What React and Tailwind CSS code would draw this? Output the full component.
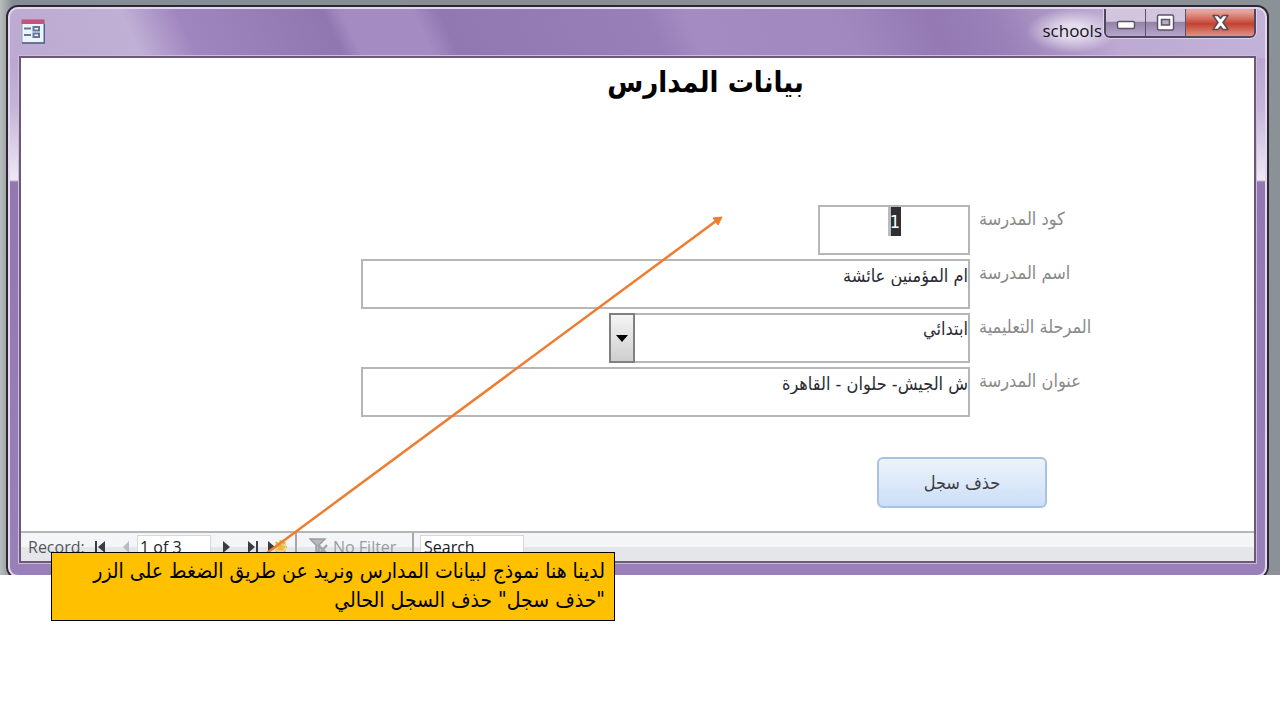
import React, { useState } from "react";

const fieldClass =
  "block h-[50px] w-full rounded-none border-2 border-[#b6b6b6] bg-white px-0 pt-0 pb-[18px] text-[18px] leading-7 text-[#2b2b33] outline-none";

const labelClass =
  "text-left text-[18px] leading-7 whitespace-nowrap text-[#8a8a8a]";

const FormIcon = () => (
  <svg className="h-[25px] w-6" viewBox="0 0 24 25" fill="none">
    <rect x="1" y="1" width="22" height="23" rx="1" fill="#eef4fb" stroke="#8fa3c0" strokeWidth="1" />
    <path d="M0.5 0.5h23v4.5h-23z" fill="#c4527c" />
    <path d="M3 9.5h7M3 16h7" stroke="#60779b" strokeWidth="2" />
    <path d="M12.5 8h5.5v3.5h-5.5zM12.5 14.5h5.5v3.5h-5.5z" fill="#fff" stroke="#60779b" strokeWidth="2" />
    <path d="M1 24h22.5V5" stroke="#47618a" strokeWidth="1.5" />
  </svg>
);

const TitleBar = () => (
  <header className="flex h-[47px] items-start pl-0.5">
    <div className="pt-[10px]">
      <FormIcon />
    </div>
    <span className="-mr-3.5 ml-auto bg-[radial-gradient(closest-side,rgba(255,255,255,0.65)_30%,transparent)] px-4 pt-3 pb-3 text-[17px] leading-5 text-[#15101c]">
      schools
    </span>
    <div className="flex h-[29px] overflow-hidden rounded-b-md border-2 border-t-0 border-[#4f4660] shadow-[0_0_0_1px_#ddd0e8]">
      <button
        type="button"
        aria-label="Minimize"
        className="flex w-10 items-center justify-center border-r border-[#5d516e] bg-linear-to-b from-[#d2c6de] from-45% via-[#9384a6] via-50% to-[#b9a5cd] pt-1"
      >
        <svg className="h-[10px] w-5" viewBox="0 0 20 10">
          <rect x="1.5" y="1.5" width="17" height="7" rx="1.5" fill="#fff" stroke="#5c5568" strokeWidth="1.5" />
        </svg>
      </button>
      <button
        type="button"
        aria-label="Maximize"
        className="flex w-10 items-center justify-center border-r border-[#5d516e] bg-linear-to-b from-[#d2c6de] from-45% via-[#9384a6] via-50% to-[#b9a5cd]"
      >
        <svg className="h-[17px] w-[19px]" viewBox="0 0 19 17">
          <rect x="1.5" y="1" width="16" height="15" rx="1.5" fill="#fff" stroke="#5c5568" strokeWidth="1.5" />
          <rect x="5.5" y="5.5" width="8" height="5.5" fill="#b8adc6" stroke="#5c5568" strokeWidth="1.5" />
        </svg>
      </button>
      <button
        type="button"
        aria-label="Close"
        className="flex w-[68px] items-center justify-center bg-linear-to-b from-[#e5a39d] from-10% via-[#c2402f] via-55% to-[#df9184]"
      >
        <svg className="h-[17px] w-[17px]" viewBox="0 0 17 17">
          <path
            d="M1 1.5h5l2.5 3 2.5-3h5l-5 7 5 7h-5l-2.5-3-2.5 3h-5l5-7z"
            fill="#fff"
            stroke="#5b4a52"
            strokeWidth="1.5"
            strokeLinejoin="round"
          />
        </svg>
      </button>
    </div>
  </header>
);

const SchoolForm = () => {
  const [code, setCode] = useState("1");
  const [name, setName] = useState("ام المؤمنين عائشة");
  const [stage, setStage] = useState("ابتدائي");
  const [address, setAddress] = useState("ش الجيش- حلوان - القاهرة");

  return (
    <form
      className="h-[473px] bg-white font-['DejaVu_Sans_Condensed','DejaVu_Sans',sans-serif]"
      onSubmit={(e) => e.preventDefault()}
    >
      <h1
        dir="rtl"
        className="mr-[96px] ml-[232px] text-center text-[29px] leading-[48px] font-bold text-black"
      >
        بيانات المدارس
      </h1>

      <div
        dir="rtl"
        className="mt-[99px] mr-[157px] ml-[340px] grid grid-cols-[118px_minmax(0,1fr)] gap-x-[9px] gap-y-1"
      >
        <label htmlFor="code" className={labelClass}>كود المدرسة</label>
        <input
          id="code"
          value={code}
          onChange={(e) => setCode(e.target.value)}
          className="block h-[50px] w-[152px] border-2 border-[#b6b6b6] bg-white bg-[linear-gradient(to_right,#bbb_3px,#303034_3px)] bg-size-[13px_29px] bg-position-[center_top] bg-no-repeat pt-0 pr-0 pb-[18px] pl-0.5 text-center text-[18px] leading-7 text-white outline-none"
        />

        <label htmlFor="name" className={labelClass}>اسم المدرسة</label>
        <input
          id="name"
          value={name}
          onChange={(e) => setName(e.target.value)}
          className={fieldClass}
        />

        <label htmlFor="stage" className={labelClass}>المرحلة التعليمية</label>
        <div className="relative w-[361px]">
          <select
            id="stage"
            value={stage}
            onChange={(e) => setStage(e.target.value)}
            className={`${fieldClass} appearance-none`}
          >
            <option value="ابتدائي">ابتدائي</option>
          </select>
          <span className="pointer-events-none absolute inset-y-0 left-0 flex w-[26px] items-center justify-center border-2 border-[#808080] bg-linear-to-b from-[#f4f4f4] to-[#cfcfcf]">
            <svg className="h-[7px] w-3" viewBox="0 0 12 7">
              <path d="M0 0h12l-6 7z" fill="#000" />
            </svg>
          </span>
        </div>

        <label htmlFor="address" className={labelClass}>عنوان المدرسة</label>
        <input
          id="address"
          value={address}
          onChange={(e) => setAddress(e.target.value)}
          className={fieldClass}
        />
      </div>

      <div className="mt-10 mr-[207px] flex justify-end">
        <button
          type="button"
          dir="rtl"
          className="h-[51px] w-[170px] rounded-md border-2 border-[#a9c1e2] bg-linear-to-b from-[#edf3fc] to-[#cbdff7] text-[18px] text-[#3d3d42]"
        >
          حذف سجل
        </button>
      </div>
    </form>
  );
};

const RecordBar = () => (
  <footer className="flex h-[30px] items-stretch border-t-2 border-[#b4b6ba] bg-linear-to-b from-[#f4f5f7] from-50% to-[#e5e6e9] to-50% text-[16px] leading-7 text-[#55565e]">
    <span className="w-[65px] pl-[7px]">Record:</span>
    <button type="button" aria-label="First record" className="flex w-[30px] items-center pl-2">
      <svg className="h-3 w-3" viewBox="0 0 12 12">
        <path d="M1 0h2v12H1zM11 0v12L4 6z" fill="#3c3c44" />
      </svg>
    </button>
    <button type="button" aria-label="Previous record" className="flex w-[21px] items-center pl-1.5">
      <svg className="h-3 w-2" viewBox="0 0 8 12">
        <path d="M7 0v12L1 6z" fill="#b9bbc0" />
      </svg>
    </button>
    <input
      aria-label="Current record"
      defaultValue="1 of 3"
      className="mt-0.5 w-[74px] border border-[#d5d7da] bg-white px-0.5 pb-[3px] text-[16px] leading-5 text-[#25252c] outline-none"
    />
    <button type="button" aria-label="Next record" className="flex w-[34px] items-center pl-3">
      <svg className="h-3 w-2" viewBox="0 0 8 12">
        <path d="M0 0v12l7-6z" fill="#3c3c44" />
      </svg>
    </button>
    <button type="button" aria-label="Last record" className="flex w-[22px] items-center pl-0.5">
      <svg className="h-3 w-3" viewBox="0 0 12 12">
        <path d="M9 0h2v12H9zM1 0v12l7-6z" fill="#3c3c44" />
      </svg>
    </button>
    <button type="button" aria-label="New record" className="flex w-7 items-center">
      <svg className="h-4 w-5" viewBox="0 0 20 16">
        <path d="M1 2v12l7-6z" fill="#3c3c44" />
        <path d="M8 3h11v11H8z" fill="#f3d98c" />
        <path d="M13.5 1v14M7 8h13M9 3l9 10M18 3L9 13" stroke="#e8b93c" strokeWidth="2" strokeDasharray="3 1" />
      </svg>
    </button>
    <div className="flex w-[119px] items-center border-x-2 border-[#a6a8ad] pl-3 text-[#999ba0]">
      <svg className="mr-1 h-[18px] w-5" viewBox="0 0 20 18" fill="none">
        <path d="M1 1h15l-6 6v9l-3-3V7z" fill="#b9babd" stroke="#9b9ca1" strokeWidth="1.5" />
        <path d="M9 7l9 9M18 7l-8 9" stroke="#a4a5aa" strokeWidth="2.5" />
      </svg>
      <span className="whitespace-nowrap">No Filter</span>
    </div>
    <input
      aria-label="Search"
      defaultValue="Search"
      className="mt-0.5 ml-1.5 w-[104px] border border-[#d5d7da] bg-white px-[3px] pb-[3px] text-[16px] leading-5 text-[#18181d] outline-none"
    />
  </footer>
);

const App = () => {
  return (
    <main className="relative min-h-screen overflow-hidden bg-white font-['Open_Sans','DejaVu_Sans',sans-serif]">
      <div className="h-[575px] overflow-hidden bg-linear-to-r from-[#b9bdbd] from-0% via-[#858d94] via-1% to-[#8b9297] pt-[5px] pr-[11px] pl-[6px]">
        <section className="rounded-xl border-2 border-[#2b2830] bg-[linear-gradient(to_bottom,transparent_0,transparent_49px,#baa6cf_50px,#c5b4d9_100px,#eee8f4_173px,#9277b1_175px,#9a80b9_100%)]">
          {/* Glass frame around the client area */}
          <div className="rounded-[10px] border-2 border-[#e3d8ee] bg-[linear-gradient(65deg,#bda9d1_0,#c0b0d5_120px,#a086bf_170px,#9177b0_303px,#a48bc1_320px,#a48bc1_385px,#9178b1_408px,#997fb8_595px,#a48bc1_630px,#a189bf_770px,#9479b3_850px,#9a81b8_910px,#bda9d2_1010px,#c3b3d9_100%)] bg-size-[100%_49px] bg-no-repeat px-[9px] pb-3">
            <TitleBar />
            <div className="border-2 border-[#6a5a75] shadow-[0_0_0_1px_#cbbddb]">
              <SchoolForm />
              <RecordBar />
            </div>
          </div>
        </section>
      </div>

      {/* Arrow from the note to the form */}
      <svg
        className="pointer-events-none absolute top-[210px] left-[260px] h-[350px] w-[470px]"
        viewBox="260 210 470 350"
      >
        <path d="M267 553L716 221" stroke="#ed7d31" strokeWidth="2.5" />
        <path d="M722 217l-9 1 5 7z" fill="#ed7d31" stroke="#ed7d31" strokeWidth="1" />
      </svg>

      <p
        dir="rtl"
        className="absolute top-[552px] left-[51px] w-[564px] border border-black bg-[#ffc000] px-[9px] pt-1 pb-[5px] font-['DejaVu_Sans_Condensed','DejaVu_Sans',sans-serif] text-[21px] leading-[29px] text-black"
      >
        لدينا هنا نموذج لبيانات المدارس ونريد عن طريق الضغط على الزر
        <br />
        "حذف سجل" حذف السجل الحالي
      </p>
    </main>
  );
};

export default App;
